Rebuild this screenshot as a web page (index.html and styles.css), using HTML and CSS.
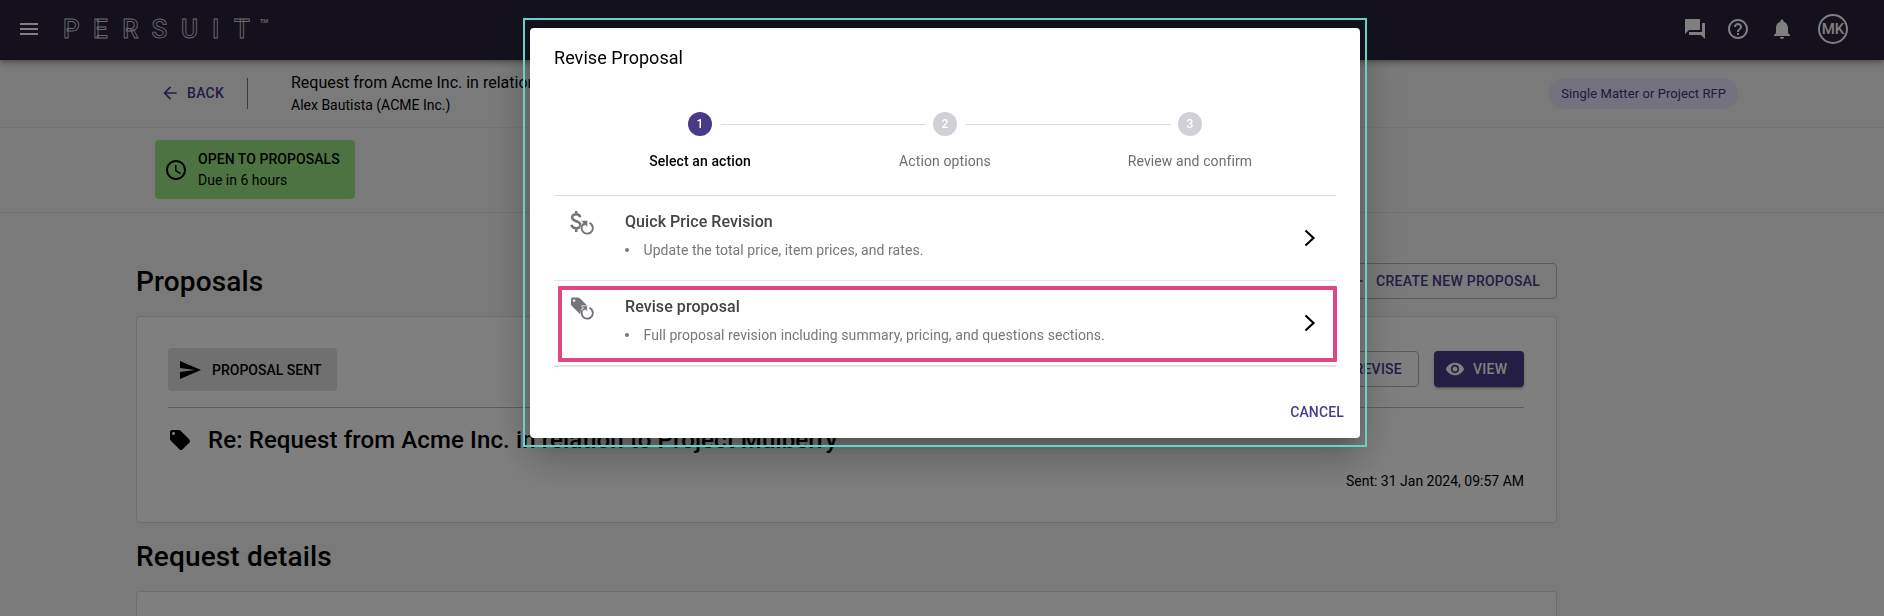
FILE: index.html
```
<!DOCTYPE html>
<html lang="en">
<head>
  <meta charset="UTF-8">
  <meta name="viewport" content="width=device-width, initial-scale=1.0">
  <title>Persuit - Revise Proposal</title>
  <link rel="stylesheet" href="styles.css">
</head>
<body>
  <header class="topbar">
    <svg class="menu-icon" width="24" height="24" viewBox="0 0 24 24"><path d="M3 18h18v-2H3v2zm0-5h18v-2H3v2zm0-7v2h18V6H3z"/></svg>
    <svg class="logo" width="210" height="28" viewBox="0 0 210 28">
      <text class="logo-name" x="0 30 59.3 88.5 118 149 171" y="23">PERSUIT</text>
      <text class="logo-tm" x="197" y="8">TM</text>
    </svg>
    <div class="topbar-actions">
      <svg width="24" height="24" viewBox="0 0 24 24"><path d="M21 6h-2v9H6v2c0 .55.45 1 1 1h11l4 4V7c0-.55-.45-1-1-1zm-4 6V3c0-.55-.45-1-1-1H3c-.55 0-1 .45-1 1v14l4-4h10c.55 0 1-.45 1-1z"/></svg>
      <svg width="24" height="24" viewBox="0 0 24 24"><path d="M11 18h2v-2h-2v2zm1-16C6.480 2 2 6.480 2 12s4.480 10 10 10 10-4.480 10-10S17.520 2 12 2zm0 18c-4.410 0-8-3.590-8-8s3.590-8 8-8 8 3.590 8 8-3.590 8-8 8zm0-14c-2.210 0-4 1.790-4 4h2c0-1.100.900-2 2-2s2 .900 2 2c0 2-3 1.750-3 5h2c0-2.250 3-2.500 3-5 0-2.210-1.790-4-4-4z"/></svg>
      <svg width="24" height="24" viewBox="0 0 24 24"><path d="M12 22c1.100 0 2-.900 2-2h-4c0 1.100.890 2 2 2zm6-6v-5c0-3.070-1.640-5.640-4.500-6.320V4c0-.830-.670-1.500-1.500-1.500s-1.500.670-1.500 1.500v.680C7.630 5.360 6 7.920 6 11v5l-2 2v1h16v-1l-2-2z"/></svg>
      <div class="avatar">MK</div>
    </div>
  </header>

  <div class="titlebar">
    <a class="back">
      <svg width="20" height="20" viewBox="0 0 24 24"><path d="M20 11H7.830l5.590-5.590L12 4l-8 8 8 8 1.410-1.410L7.830 13H20v-2z"/></svg>
      BACK
    </a>
    <div class="request">
      <div class="request-title">Request from Acme Inc. in relation to Project Mulberry</div>
      <div class="request-author">Alex Bautista (ACME Inc.)</div>
    </div>
    <div class="pill">Single Matter or Project RFP</div>
  </div>

  <div class="statusbar">
    <div class="status">
      <svg width="24" height="24" viewBox="0 0 24 24"><path d="M11.990 2C6.470 2 2 6.480 2 12s4.470 10 9.990 10C17.520 22 22 17.520 22 12S17.520 2 11.990 2zM12 20c-4.420 0-8-3.580-8-8s3.580-8 8-8 8 3.580 8 8-3.580 8-8 8zm.5-13H11v6l5.250 3.150.75-1.230-4.500-2.670z"/></svg>
      <div>
        <div class="status-name">OPEN TO PROPOSALS</div>
        <div>Due in 6 hours</div>
      </div>
    </div>
  </div>

  <main>
    <div class="section-head">
      <h1>Proposals</h1>
      <button class="btn create">
        <svg width="20" height="20" viewBox="0 0 24 24"><path d="M19 13h-6v6h-2v-6H5v-2h6V5h2v6h6v2z"/></svg>
        CREATE NEW PROPOSAL
      </button>
    </div>
    <div class="card">
      <div class="card-head">
        <div class="badge">
          <svg width="24" height="24" viewBox="0 0 24 24"><path d="M2.010 21L23 12 2.010 3 2 10l15 2-15 2z"/></svg>
          PROPOSAL SENT
        </div>
        <div class="card-buttons">
          <button class="btn">REVISE</button>
          <button class="btn primary">
            <svg width="20" height="20" viewBox="0 0 24 24"><path d="M12 4.500C7 4.500 2.730 7.610 1 12c1.730 4.390 6 7.500 11 7.500s9.270-3.110 11-7.500c-1.730-4.390-6-7.500-11-7.500zM12 17c-2.760 0-5-2.240-5-5s2.240-5 5-5 5 2.240 5 5-2.240 5-5 5zm0-8c-1.660 0-3 1.340-3 3s1.340 3 3 3 3-1.340 3-3-1.340-3-3-3z"/></svg>
            VIEW
          </button>
        </div>
      </div>
      <div class="card-title">
        <svg width="24" height="24" viewBox="0 0 24 24"><path d="M21.410 11.580l-9-9C12.050 2.220 11.550 2 11 2H4c-1.100 0-2 .900-2 2v7c0 .550.220 1.050.590 1.420l9 9c.360.360.860.580 1.410.580.550 0 1.050-.220 1.410-.590l7-7c.370-.360.590-.860.590-1.410 0-.550-.230-1.060-.590-1.420zM5.500 7C4.670 7 4 6.330 4 5.500S4.670 4 5.500 4 7 4.670 7 5.500 6.330 7 5.500 7z"/></svg>
        <h2>Re: Request from Acme Inc. in relation to Project Mulberry</h2>
      </div>
      <div class="sent">Sent: 31 Jan 2024, 09:57 AM</div>
    </div>
    <h1 class="details-head">Request details</h1>
    <div class="card details"></div>
  </main>

  <div class="backdrop"></div>

  <div class="dialog">
    <div class="dialog-title">Revise Proposal</div>
    <div class="stepper">
      <div class="step active"><span class="dot">1</span>Select an action</div>
      <div class="step"><span class="dot">2</span>Action options</div>
      <div class="step"><span class="dot">3</span>Review and confirm</div>
    </div>
    <div class="option">
      <svg class="option-icon" width="24" height="24" viewBox="0 0 24 24">
        <path class="line dollar" d="M10.200 6.200C9.800 4.200 8.300 3.300 6.200 3.300 4 3.300 2.100 4.300 2.100 6.500c0 4.600 8.300 2.800 8.300 7.200 0 2.200-1.900 3.500-4.200 3.500-2.500 0-4.300-1.200-4.700-3.400M6.200 0v3.500M6.200 17v4"/>
        <circle class="mask" cx="17" cy="17" r="6.700"/>
        <path class="line" d="M19.500 11.900A5.600 5.600 0 1 1 13.300 13"/>
        <path d="M11.300 9.800h6v6l-2.100-2.100-1.500 1.300-1.500-1.500 1.300-1.500z"/>
      </svg>
      <div class="option-text">
        <h3>Quick Price Revision</h3>
        <ul><li>Update the total price, item prices, and rates.</li></ul>
      </div>
      <svg class="chevron" width="12" height="18" viewBox="0 0 12 18"><path d="M1.500 1.500L9.500 9l-8 7.500"/></svg>
    </div>
    <div class="option">
      <svg class="option-icon" width="24" height="24" viewBox="0 0 24 24">
        <path d="M2.500 1.500H8c.6 0 1.100.2 1.500.6l8.200 7.800-7.500 8.300-8.600-8.500C1.200 9.300 1 8.800 1 8.200V3c0-.8.700-1.500 1.500-1.500z"/>
        <circle class="mask" cx="4.100" cy="4.600" r="1.200"/>
        <circle class="mask" cx="17" cy="17" r="6.700"/>
        <path class="line" d="M19.500 11.900A5.600 5.600 0 1 1 13.300 13"/>
        <path class="arrow" d="M11.300 9.800h6v6l-2.100-2.100-1.500 1.300-1.500-1.500 1.300-1.500z"/>
      </svg>
      <div class="option-text">
        <h3>Revise proposal</h3>
        <ul><li>Full proposal revision including summary, pricing, and questions sections.</li></ul>
      </div>
      <svg class="chevron" width="12" height="18" viewBox="0 0 12 18"><path d="M1.500 1.500L9.500 9l-8 7.500"/></svg>
      <div class="highlight"></div>
    </div>
    <div class="dialog-footer">CANCEL</div>
    <div class="outline"></div>
  </div>
</body>
</html>
```
FILE: styles.css
```
* {
  box-sizing: border-box;
}

body {
  display: flex;
  flex-direction: column;
  margin: 0;
  height: 616px;
  overflow: hidden;
  background: #f5f5f5;
  color: #000;
  font-family: Roboto, sans-serif;
  font-size: 14px;
}

h1, h2, h3, ul {
  margin: 0;
  padding: 0;
}

svg {
  display: block;
  flex-shrink: 0;
  fill: currentColor;
}

.topbar {
  position: relative;
  display: flex;
  flex-shrink: 0;
  align-items: center;
  height: 60px;
  padding: 0 36px 3px 17px;
  background: #28233a;
  color: #fff;
  box-shadow: 0 2px 4px -1px rgba(0, 0, 0, 0.2), 0 4px 5px rgba(0, 0, 0, 0.14), 0 1px 10px rgba(0, 0, 0, 0.12);
}

.logo {
  margin-left: 22px;
}

.logo-name {
  font-size: 26px;
  font-weight: 500;
  fill: none;
  stroke: #d0ced6;
  stroke-width: 0.9px;
}

.logo-tm {
  font-size: 5.5px;
}

.topbar-actions {
  display: flex;
  align-items: center;
  gap: 19.5px;
  margin-left: auto;
}

.avatar {
  width: 30px;
  height: 30px;
  margin-left: 5px;
  border: 2px solid #fff;
  border-radius: 50%;
  font-size: 15px;
  font-weight: 500;
  line-height: 26px;
  text-align: center;
}

.titlebar {
  display: flex;
  flex-shrink: 0;
  align-items: center;
  height: 68px;
  padding: 0 146px 0 159px;
  border-bottom: 1px solid #e8e8e8;
}

.back {
  display: flex;
  align-items: center;
  gap: 7px;
  width: 89px;
  height: 31px;
  padding: 0 0 1px 1px;
  border-right: 1px solid #777;
  color: #4a3a8c;
  font-weight: 500;
  letter-spacing: 0.3px;
}

.request {
  margin-left: 43px;
  margin-top: -1px;
  line-height: 20px;
}

.request-title {
  font-size: 16px;
  line-height: 24px;
}

.pill {
  height: 31px;
  margin-left: auto;
  padding: 0 12px;
  border-radius: 16px;
  background: #e8e4fc;
  color: #44337f;
  font-size: 13px;
  letter-spacing: 0.07px;
  line-height: 31px;
}

.statusbar {
  flex-shrink: 0;
  height: 85px;
  padding: 12px 155px;
  border-bottom: 1px solid #e2e2e2;
}

.status {
  display: flex;
  align-items: center;
  gap: 10px;
  width: 200px;
  height: 59px;
  padding: 1px 0 0 9px;
  border-radius: 4px;
  background: #9ce684;
  line-height: 21px;
}

.status-name {
  letter-spacing: 0.05px;
  font-weight: 500;
}

main {
  flex: 1;
  min-height: 0;
  overflow: hidden;
  display: flex;
  flex-direction: column;
  width: 1421px;
  margin-left: 136px;
}

h1 {
  font-size: 28px;
  font-weight: 500;
  letter-spacing: 0.15px;
}

.section-head {
  display: flex;
  flex-shrink: 0;
  align-items: center;
  justify-content: space-between;
  height: 103px;
  padding-top: 33px;
}

.btn {
  display: flex;
  align-items: center;
  height: 36px;
  padding: 0 16px;
  border: 1px solid #b4aed0;
  border-radius: 4px;
  background: none;
  color: #4a3a8c;
  font: 500 14px Roboto, sans-serif;
  letter-spacing: 0.25px;
}

.create {
  gap: 9px;
}

.card {
  flex-shrink: 0;
  height: 207px;
  padding: 32px 32px 0 31px;
  border: 1px solid #dcdcdc;
  border-radius: 4px;
  background: #fff;
}

/* runs on below the fold */
.details {
  flex: 1;
  height: auto;
  min-height: 0;
  padding: 0;
  border-bottom: none;
  border-radius: 4px 4px 0 0;
}

.card-head {
  display: flex;
  justify-content: space-between;
  height: 59px;
  border-bottom: 1px solid #bdbdbd;
}

.badge {
  display: flex;
  align-items: center;
  gap: 10px;
  width: 169px;
  height: 43px;
  margin-top: -1px;
  padding-left: 10px;
  border-radius: 4px;
  background: #e0e0e0;
  font-weight: 500;
}

.card-buttons {
  display: flex;
  gap: 15px;
  padding-top: 2px;
}

.primary {
  gap: 8px;
  width: 90px;
  padding: 0 11px;
  border: none;
  background: #483a88;
  color: #fff;
  box-shadow: 0 3px 1px -2px rgba(0, 0, 0, 0.2), 0 2px 2px rgba(0, 0, 0, 0.14), 0 1px 5px rgba(0, 0, 0, 0.12);
}

.card-title {
  display: flex;
  align-items: center;
  gap: 16px;
  height: 64px;
}

h2 {
  font-size: 24px;
  font-weight: 500;
  letter-spacing: 0.11px;
}

.sent {
  padding-top: 1px;
  text-align: right;
}

.details-head {
  flex-shrink: 0;
  height: 68px;
  line-height: 68px;
}

.backdrop {
  position: fixed;
  inset: 0;
  background: rgba(0, 0, 0, 0.5);
}

/* Revise dialog */
.dialog {
  position: fixed;
  top: 28px;
  left: 530px;
  width: 830px;
  height: 410px;
  padding: 0 24px;
  border-radius: 4px;
  background: #fff;
  box-shadow: 0 11px 15px -7px rgba(0, 0, 0, 0.2), 0 24px 38px 3px rgba(0, 0, 0, 0.14), 0 9px 46px 8px rgba(0, 0, 0, 0.12);
}

.outline {
  position: absolute;
  top: -10px;
  left: -7px;
  width: 844px;
  height: 429px;
  border: 2px solid #66d3c7;
}

.dialog-title {
  height: 84px;
  padding-top: 19px;
  font-size: 18px;
  letter-spacing: 0.05px;
}

.stepper {
  display: grid;
  grid-template-columns: repeat(3, 245px);
  justify-content: center;
  height: 84px;
  border-bottom: 1px solid #e0e0e0;
}

.step {
  position: relative;
  display: flex;
  flex-direction: column;
  align-items: center;
  gap: 17px;
  color: #6e6e73;
  letter-spacing: 0.1px;
  line-height: 16px;
}

/* connector between the dots */
.step + .step::before {
  content: "";
  position: absolute;
  top: 12px;
  right: 142px;
  width: 205px;
  height: 1px;
  background: #dcdcdf;
}

.step.active {
  color: #000;
  font-weight: 500;
}

.dot {
  width: 24px;
  height: 24px;
  border-radius: 50%;
  background: #d1d0d6;
  color: #fff;
  font-size: 12px;
  font-weight: 500;
  line-height: 24px;
  text-align: center;
}

.active .dot {
  background: #483a88;
}

.option {
  position: relative;
  display: flex;
  height: 85px;
  padding: 15px 20px 0 16px;
  border-bottom: 1px solid #e0e4e4;
}

.option + .option {
  height: 86px;
  border-bottom-width: 2px;
}

.option-icon {
  color: #757579;
}

.line {
  fill: none;
  stroke: currentColor;
  stroke-width: 1.9;
}

.dollar {
  stroke-width: 2.5;
}

.mask {
  fill: #fff;
}

.arrow {
  stroke: #fff;
  stroke-width: 0.7;
}

.option-text {
  margin-left: 31px;
}

h3 {
  color: #444;
  font-size: 16px;
  font-weight: 500;
  letter-spacing: 0.07px;
  line-height: 21px;
}

li {
  display: flex;
  align-items: center;
  margin-top: 8px;
  color: #77777d;
  letter-spacing: 0.07px;
  line-height: 20px;
}

li::before {
  content: "";
  width: 4px;
  height: 4px;
  margin-right: 14.5px;
  border-radius: 50%;
  background: #77777d;
}

.chevron {
  margin: 18px 0 0 auto;
  fill: none;
  stroke: #000;
  stroke-width: 2.2;
}

.highlight {
  position: absolute;
  top: 5px;
  left: 4px;
  width: 779px;
  height: 76px;
  border: 4px solid #df4684;
  border-radius: 1px;
}

.dialog-footer {
  padding-top: 37px;
  margin-right: -8px;
  color: #4a3a8c;
  font-weight: 500;
  letter-spacing: 0.15px;
  text-align: right;
}
```
